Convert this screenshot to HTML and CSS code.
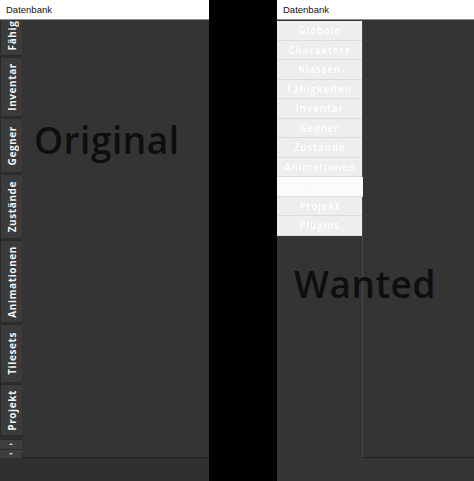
FILE: index.html
```html
<!DOCTYPE html>
<html lang="de">
<head>
<meta charset="utf-8">
<title>Datenbank</title>
<link rel="stylesheet" href="styles.css">
</head>
<body>
<div class="win win-left">
  <div class="titlebar">Datenbank</div>
  <div class="wbody">
    <div class="tabcol">
      <div class="tabs">
        <div class="tab t-faehig"><span>Fähigkeiten</span></div>
        <div class="tab t-inventar"><span>Inventar</span></div>
        <div class="tab t-gegner"><span>Gegner</span></div>
        <div class="tab t-zustaende"><span>Zustände</span></div>
        <div class="tab t-anim"><span>Animationen</span></div>
        <div class="tab t-tiles"><span>Tilesets</span></div>
        <div class="tab t-projekt"><span>Projekt</span></div>
      </div>
      <div class="scrollbtns">
        <div class="sbtn"><span class="arr up"></span></div>
        <div class="sbtn"><span class="arr down"></span></div>
      </div>
    </div>
    <div class="content"></div>
  </div>
  <div class="footer"></div>
  <div class="label label-original">Original</div>
</div>
<div class="win win-right">
  <div class="titlebar">Datenbank</div>
  <div class="rbody">
    <div class="list">
      <div class="item">Globale</div>
      <div class="item">Charaktere</div>
      <div class="item">Klassen</div>
      <div class="item">Fähigkeiten</div>
      <div class="item">Inventar</div>
      <div class="item">Gegner</div>
      <div class="item">Zustände</div>
      <div class="item">Animationen</div>
      <div class="item selected">Tilesets</div>
      <div class="item">Projekt</div>
      <div class="item">Plugins</div>
    </div>
    <div class="rarea">
      <div class="rpane"></div>
    </div>
  </div>
  <div class="label label-wanted">Wanted</div>
</div>
</body>
</html>
```
FILE: styles.css
```css
html, body {
  margin: 0;
  padding: 0;
}
body {
  width: 474px;
  height: 481px;
  overflow: hidden;
  background: #000;
  display: flex;
  justify-content: space-between;
  font-family: "Open Sans", "DejaVu Sans", sans-serif;
}
.win {
  position: relative;
  display: flex;
  flex-direction: column;
  height: 481px;
  background: #343434;
}
.win-left { width: 209px; }
.win-right { width: 197px; }

.titlebar {
  height: 20px;
  box-sizing: border-box;
  background: #fff;
  border-bottom: 1px solid #8c8c8c;
  font-family: "Liberation Sans", "DejaVu Sans", sans-serif;
  font-size: 9.5px;
  line-height: 19px;
  color: #111;
  padding-left: 6px;
  flex: none;
}

.wbody {
  height: 438px;
  display: flex;
  flex: none;
}
.tabcol {
  width: 22px;
  display: flex;
  flex-direction: column;
  flex: none;
  background: #2e2e2e;
}
.tabs {
  flex: 1;
  min-height: 0;
  overflow: hidden;
  display: flex;
  flex-direction: column;
  justify-content: flex-end;
  gap: 1px;
  padding-bottom: 3px;
}
.tab {
  flex: none;
  width: 22px;
  box-sizing: border-box;
  background: #3b3b3b;
  border: 1px solid #292929;
  border-right: none;
  display: flex;
  align-items: center;
  justify-content: center;
}
.t-faehig { height: 76px; }
.t-inventar { height: 60px; }
.t-gegner { height: 55px; }
.t-zustaende { height: 65px; }
.t-anim { height: 83px; }
.t-tiles { height: 59px; }
.t-projekt { height: 52px; }
.tab span {
  writing-mode: vertical-rl;
  transform: rotate(180deg);
  color: #f2f2f2;
  font-weight: 700;
  font-size: 10px;
  letter-spacing: 0.6px;
  line-height: 12px;
  white-space: nowrap;
}
.scrollbtns {
  height: 19px;
  display: flex;
  flex-direction: column;
  flex: none;
}
.sbtn {
  flex: 1;
  background: #3e3e3e;
  border-top: 1px solid #2a2a2a;
  display: flex;
  align-items: center;
  justify-content: center;
}
.arr {
  width: 0;
  height: 0;
  border-left: 2px solid transparent;
  border-right: 2px solid transparent;
}
.arr.up { border-bottom: 2px solid #cfcfcf; }
.arr.down { border-top: 2px solid #cfcfcf; }

.content {
  flex: 1;
  background: #343434;
  border-bottom: 1px solid #222;
}
.footer {
  flex: 1;
  background: #303030;
}

.rbody {
  flex: 1;
  display: flex;
}
.list {
  width: 85px;
  flex: none;
  padding-top: 1px;
  display: flex;
  flex-direction: column;
  align-items: stretch;
}
.item {
  height: 19.5px;
  box-sizing: border-box;
  background: #eeeeee;
  border-bottom: 1px solid #dcdcdc;
  color: #fff;
  font-weight: 700;
  font-size: 10px;
  letter-spacing: 0.6px;
  line-height: 18px;
  text-align: center;
  white-space: nowrap;
  overflow: hidden;
  text-shadow: 0 0 1px rgba(0, 0, 0, 0.08);
}
.item.selected {
  background: #fbfbfb;
  margin-right: -1px;
  position: relative;
  z-index: 1;
}
.rarea {
  flex: 1;
  display: flex;
  flex-direction: column;
}
.rpane {
  height: 438px;
  box-sizing: border-box;
  border-left: 1px solid #484848;
  border-bottom: 1px solid #232323;
}

.label {
  position: absolute;
  font-family: "Open Sans", "DejaVu Sans", sans-serif;
  font-size: 37px;
  font-weight: 600;
  color: #0e0e0e;
  letter-spacing: 0.5px;
  line-height: 1;
  white-space: nowrap;
}
.label-original { left: 34px; top: 121px; }
.label-wanted { left: 17px; top: 265px; }
```
